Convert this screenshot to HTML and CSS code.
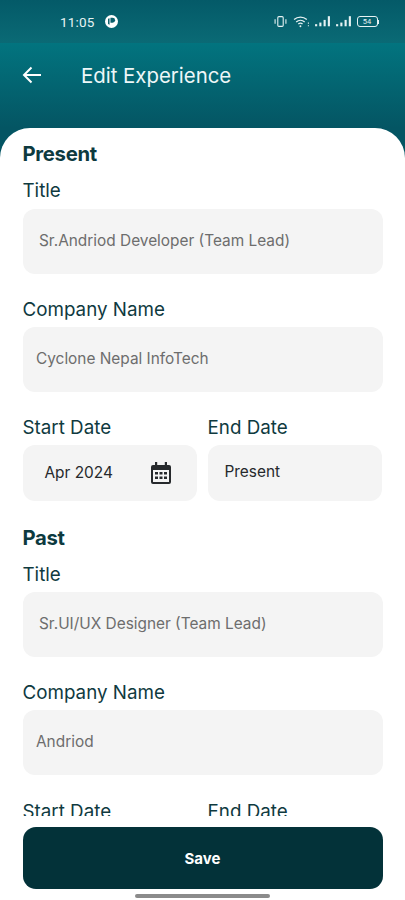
FILE: index.html
```html
<!DOCTYPE html>
<html lang="en">
<head>
<meta charset="utf-8">
<title>Edit Experience</title>
<link rel="stylesheet" href="styles.css">
</head>
<body>
<div class="screen">
  <div class="status">
    <div class="status-left">
      <span class="time">11:05</span>
      <svg class="pill" viewBox="0 0 12 12" width="13" height="13"><circle cx="6" cy="6" r="6" fill="#fff"/><path d="M5 2.600h2a2.300 2.300 0 0 1 0 4.600H5z" fill="#0a5f6b"/><path d="M2.800 3.400 4.200 3v6l-1.400-.6z" fill="#0a5f6b"/></svg>
    </div>
    <div class="status-right">
      <svg class="vibrate" viewBox="0 0 12 12" width="13" height="13" fill="none" stroke="#e6f2f3" stroke-width="1"><rect x="3.500" y="1.500" width="5" height="9" rx="1"/><path d="M1 4v4M11 4v4"/></svg>
      <svg viewBox="0 0 16 12" width="17" height="13" fill="none" stroke="#e6f2f3" stroke-width="1.200"><path d="M1 4.200a9 9 0 0 1 12 0M3 6.400a6 6 0 0 1 8 0M5 8.400a3 3 0 0 1 4 0"/><circle cx="7" cy="10.400" r="0.900" fill="#e6f2f3" stroke="none"/><path d="M14.500 7v1M14.500 9.500v1" stroke-width="1"/></svg>
      <svg viewBox="0 0 16 12" width="17" height="13" fill="#e6f2f3"><rect x="1" y="8.500" width="2" height="2"/><rect x="5" y="7" width="2" height="3.500"/><rect x="9" y="4.500" width="2" height="6"/><rect x="13" y="1" width="2" height="9.500"/></svg>
      <svg viewBox="0 0 16 12" width="17" height="13" fill="#e6f2f3"><rect x="1" y="8.500" width="2" height="2"/><rect x="5" y="7" width="2" height="3.500"/><rect x="9" y="4.500" width="2" height="6"/><rect x="13" y="1" width="2" height="9.500"/></svg>
      <div class="battery-wrap"><div class="battery"><span class="battery-level">54</span></div><span class="battery-nub"></span></div>
    </div>
  </div>
  <header class="appbar">
    <svg class="back" viewBox="0 0 20 18" width="20" height="18" fill="none" stroke="#fff" stroke-width="2"><path d="M19 9H2M9.500 1.500 2 9l7.500 7.500"/></svg>
    <h1 class="appbar-title">Edit Experience</h1>
  </header>
  <main class="sheet">
    <section class="group">
      <h2 class="heading">Present</h2>
      <label class="label label-first">Title</label>
      <div class="field"><span class="value value-title">Sr.Andriod Developer (Team Lead)</span></div>
      <label class="label">Company Name</label>
      <div class="field"><span class="value">Cyclone Nepal InfoTech</span></div>
      <div class="dates">
        <div class="date-col">
          <label class="label">Start Date</label>
          <div class="field field-date">
            <span class="date-value">Apr 2024</span>
            <svg class="calendar" viewBox="0 0 22 24" width="22" height="24"><path d="M5 1h2.200v3H14.800V1H17v3h2a2 2 0 0 1 2 2v15a2 2 0 0 1-2 2H3a2 2 0 0 1-2-2V6a2 2 0 0 1 2-2h2z" fill="#26292c"/><rect x="3" y="9" width="16" height="12" fill="#f4f4f4"/><g fill="#26292c"><rect x="5" y="11" width="3" height="2.500"/><rect x="9.500" y="11" width="3" height="2.500"/><rect x="14" y="11" width="3" height="2.500"/><rect x="5" y="15.500" width="3" height="2.500"/><rect x="9.500" y="15.500" width="3" height="2.500"/><rect x="14" y="15.500" width="3" height="2.500"/></g></svg>
          </div>
        </div>
        <div class="date-col">
          <label class="label">End Date</label>
          <div class="field field-date field-end"><span class="date-value">Present</span></div>
        </div>
      </div>
    </section>
    <section class="group group-past">
      <h2 class="heading">Past</h2>
      <label class="label label-first">Title</label>
      <div class="field"><span class="value value-title">Sr.UI/UX Designer (Team Lead)</span></div>
      <label class="label">Company Name</label>
      <div class="field"><span class="value">Andriod</span></div>
      <div class="dates">
        <div class="date-col"><label class="label">Start Date</label></div>
        <div class="date-col"><label class="label">End Date</label></div>
      </div>
    </section>
  </main>
  <footer class="footer">
    <button class="save">Save</button>
    <div class="home-bar"></div>
  </footer>
</div>
</body>
</html>
```

FILE: styles.css
```css
* { box-sizing: border-box; }
html, body { margin: 0; padding: 0; }
body { width: 405px; height: 900px; overflow: hidden; background: #fff; font-family: Inter, "Noto Sans", sans-serif; }
.screen { width: 405px; height: 900px; display: flex; flex-direction: column; overflow: hidden; background: linear-gradient(#02747f 43px, #045563 128px); }
.status { height: 43px; flex: none; display: flex; justify-content: space-between; align-items: center; padding: 8px 26px 8px 60px; background: linear-gradient(#045a68, #0a6a75); color: #e6f2f3; }
.status-left { display: flex; align-items: center; gap: 10px; }
.time { font-family: Roboto, sans-serif; font-size: 13.500px; letter-spacing: .2px; }
.status-right { display: flex; align-items: center; gap: 4px; }
.vibrate { margin-right: 2px; }
.battery-wrap { display: flex; align-items: center; margin-left: 1px; }
.battery { width: 21px; height: 11px; border: 1px solid #e6f2f3; border-radius: 3px; display: flex; align-items: center; justify-content: center; }
.battery-nub { width: 1.500px; height: 4px; background: #e6f2f3; }
.battery-level { font-family: Roboto, sans-serif; font-size: 7.500px; line-height: 1; color: #e6f2f3; }
.appbar { height: 85px; flex: none; display: flex; align-items: flex-start; padding: 21px 0 0 22px; }
.back { margin-top: 2px; flex: none; }
.appbar-title { margin: 0 0 0 39px; font-size: 20.400px; line-height: 24px; font-weight: 400; color: #eef7f8; }
.sheet { flex: 1; min-height: 0; overflow: hidden; background: #fff; border-radius: 30px 30px 0 0; padding: 14px 22.500px 0; }
.group-past { margin-top: 25px; }
.heading { margin: 0; font-size: 20.300px; line-height: 24px; font-weight: 700; color: #0d3a3f; letter-spacing: -.3px; }
.label { display: block; margin: 23.500px 0 5px; font-size: 18.800px; line-height: 24px; font-weight: 400; color: #0f3a3f; }
.label-first { margin-top: 13px; margin-bottom: 6px; }
.group-past .label-first { margin-top: 13.500px; margin-bottom: 5px; }
.dates .label { margin-top: 24.500px; }
.group-past .dates .label { margin-top: 25px; }
.field { height: 65px; background: #f4f4f4; border-radius: 12px; display: flex; align-items: center; padding: 0 13.500px 2px; }
.value { font-size: 15.400px; color: #6d6d6d; }
.value-title { padding-left: 3px; }
.dates { display: grid; grid-template-columns: 174px 174px; gap: 11px; }
.field-date { height: 55.500px; justify-content: space-between; padding: 0 25px 0 22px; }
.field-end { padding: 0 25px 2px 17px; }
.date-value { font-size: 15.400px; color: #26292c; }
.calendar { flex: none; }
.footer { flex: none; height: 84px; background: #fff; padding: 11px 22.500px 0; display: flex; flex-direction: column; align-items: center; }
.save { width: 100%; height: 62px; flex: none; border: 0; border-radius: 13px; background: #033239; color: #fff; font-family: Inter, sans-serif; font-size: 15px; font-weight: 700; }
.home-bar { width: 135px; height: 4px; margin-top: 5px; border-radius: 2px; background: #8b8b8b; }
```
